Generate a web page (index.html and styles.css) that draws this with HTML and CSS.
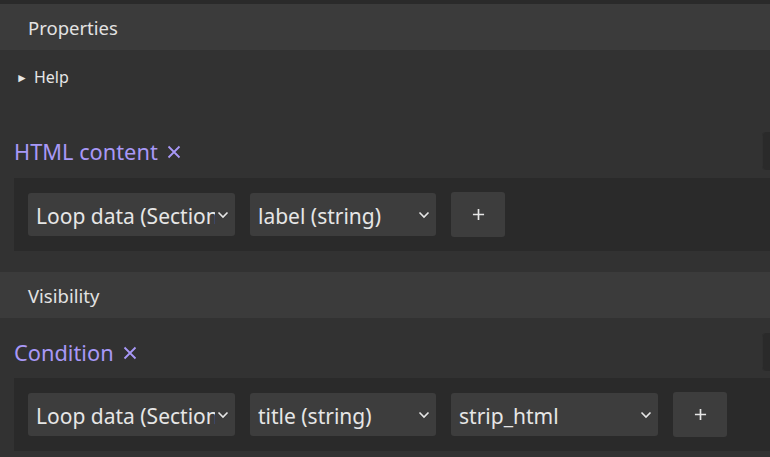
FILE: index.html
```html
<!DOCTYPE html>
<html>
<head>
<meta charset="utf-8">
<link rel="stylesheet" href="styles.css">
</head>
<body>
<div class="page">
  <div class="section-head">Properties</div>
  <div class="help"><span class="tri">&#9658;</span><span>Help</span></div>
  <div class="field-row first">
    <div class="field-label">HTML content <svg class="x" viewBox="0 0 14 14"><path d="M1.5 1.5 L12.5 12.5 M12.5 1.5 L1.5 12.5" stroke="#a898f7" stroke-width="1.8" fill="none"/></svg></div>
    <div class="side-box"></div>
  </div>
  <div class="block">
    <div class="select"><span class="sel-text">Loop data (Section)</span><svg class="chev" viewBox="0 0 12 8"><path d="M1.5 1.5 L6 6 L10.5 1.5" fill="none" stroke="#e6e6e6" stroke-width="1.6"/></svg></div>
    <div class="select narrow"><span class="sel-text">label (string)</span><svg class="chev" viewBox="0 0 12 8"><path d="M1.5 1.5 L6 6 L10.5 1.5" fill="none" stroke="#e6e6e6" stroke-width="1.6"/></svg></div>
    <div class="btn"><svg class="plus" viewBox="0 0 14 14"><path d="M7 1 V13 M1 7 H13" stroke="#e6e6e6" stroke-width="1.8" fill="none"/></svg></div>
  </div>
  <div class="section-head vis">Visibility</div>
  <div class="field-row second">
    <div class="field-label">Condition <svg class="x" viewBox="0 0 14 14"><path d="M1.5 1.5 L12.5 12.5 M12.5 1.5 L1.5 12.5" stroke="#a898f7" stroke-width="1.8" fill="none"/></svg></div>
    <div class="side-box"></div>
  </div>
  <div class="block">
    <div class="select"><span class="sel-text">Loop data (Section)</span><svg class="chev" viewBox="0 0 12 8"><path d="M1.5 1.5 L6 6 L10.5 1.5" fill="none" stroke="#e6e6e6" stroke-width="1.6"/></svg></div>
    <div class="select narrow"><span class="sel-text">title (string)</span><svg class="chev" viewBox="0 0 12 8"><path d="M1.5 1.5 L6 6 L10.5 1.5" fill="none" stroke="#e6e6e6" stroke-width="1.6"/></svg></div>
    <div class="select"><span class="sel-text">strip_html</span><svg class="chev" viewBox="0 0 12 8"><path d="M1.5 1.5 L6 6 L10.5 1.5" fill="none" stroke="#e6e6e6" stroke-width="1.6"/></svg></div>
    <div class="btn"><svg class="plus" viewBox="0 0 14 14"><path d="M7 1 V13 M1 7 H13" stroke="#e6e6e6" stroke-width="1.8" fill="none"/></svg></div>
  </div>
</div>
</body>
</html>
```
FILE: styles.css
```css
html, body {
  margin: 0;
  padding: 0;
  background: #323232;
  overflow: hidden;
}
.page {
  width: 770px;
  height: 457px;
  border-top: 4px solid #2a2a2a;
  box-sizing: border-box;
  font-family: "Noto Sans", "Open Sans", sans-serif;
  color: #e4e4e4;
  overflow: hidden;
}
.section-head {
  height: 46px;
  background: #3b3b3b;
  display: flex;
  align-items: center;
  padding-left: 28px;
  font-size: 18.5px;
  color: #e2e2e2;
}
.section-head.vis {
  margin-top: 21px;
}
.help {
  height: 54px;
  display: flex;
  align-items: center;
  padding-left: 16px;
  font-size: 16px;
  gap: 6px;
  color: #e6e6e6;
}
.tri {
  font-size: 12px;
}
.field-row {
  display: flex;
  align-items: center;
  height: 38px;
}
.field-row.first {
  margin-top: 28px;
}
.field-row.second {
  margin-top: 15px;
}
.field-label {
  padding-left: 14px;
  font-size: 21.8px;
  color: #a898f7;
  white-space: nowrap;
  display: flex;
  align-items: center;
}
.x {
  width: 14px;
  height: 14px;
  margin-left: 9px;
  margin-top: 2px;
}
.side-box {
  margin-left: auto;
  width: 8px;
  height: 38px;
  background: #2a2a2a;
  border-radius: 4px 0 0 4px;
  box-shadow: inset 1px 0 0 #303030;
}
.block {
  margin-top: 8px;
  margin-left: 14px;
  background: #2a2a2a;
  padding: 14px 14px;
  display: flex;
  align-items: center;
  gap: 15px;
}
.field-row.second + .block {
  margin-top: 7px;
}
.select {
  width: 207px;
  height: 43px;
  background: #3d3d3d;
  border-radius: 3px;
  display: flex;
  align-items: center;
  padding: 2px 6px 0 8px;
  box-sizing: border-box;
  font-size: 21px;
  color: #e6e6e6;
  overflow: hidden;
}
.select.narrow {
  width: 186px;
}
.sel-text {
  flex: 1;
  overflow: hidden;
  white-space: nowrap;
}
.chev {
  width: 12px;
  height: 8px;
  flex: none;
  margin-left: 2px;
  margin-top: -2px;
}
.btn {
  width: 54px;
  height: 45px;
  background: #3d3d3d;
  border-radius: 3px;
  display: flex;
  align-items: center;
  justify-content: center;
}
.plus {
  width: 13px;
  height: 13px;
}
```
